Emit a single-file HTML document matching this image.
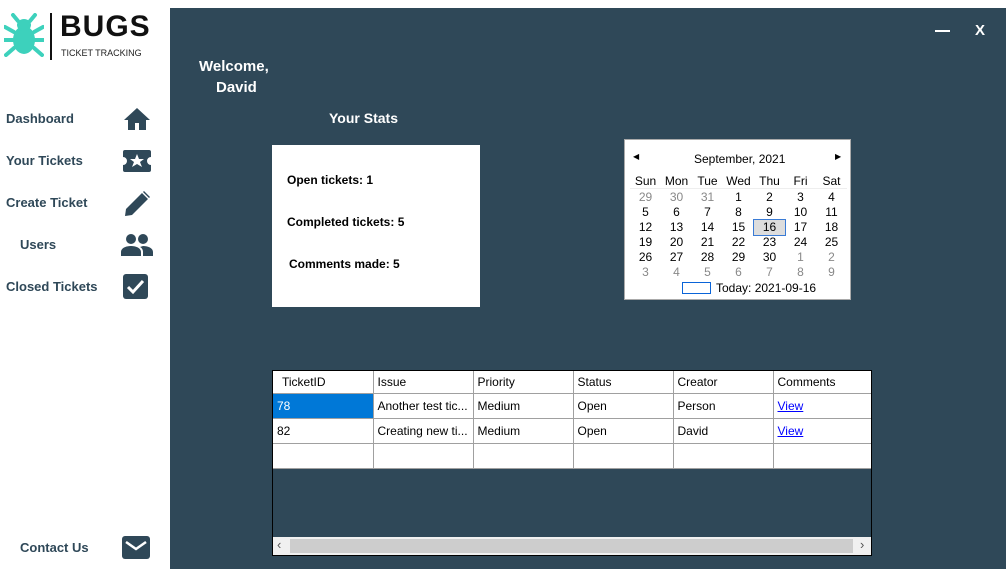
<!DOCTYPE html>
<html><head><style>
*{margin:0;padding:0;box-sizing:border-box}
body{width:1006px;height:569px;background:#fff;position:relative;overflow:hidden;font-family:"Liberation Sans",sans-serif}
.a{position:absolute}
.nav{position:absolute;left:6px;font-size:13px;font-weight:bold;color:#2f4858}
.main{position:absolute;left:170px;top:8px;width:836px;height:561px;background:#2f4858}
.w{color:#fff;font-weight:bold;font-size:15px;position:absolute}
.cal{position:absolute;left:624px;top:139px;width:227px;height:161px;background:#fff;border:1px solid #aaa;font-size:12px;color:#000}
.cal .g{position:absolute;left:5px;width:217px;display:grid;grid-template-columns:repeat(7,31px);text-align:center}
.gr{color:#888}
table{border-collapse:collapse;font-size:12px;table-layout:fixed}
td{width:100px;height:25px;border:1px solid #a0a0a0;padding:0 0 0 4px;font-size:12px;line-height:14px;overflow:hidden;white-space:nowrap}
tr.h td{height:22px;border-top:0}
</style></head><body>
<svg class="a" style="left:4px;top:13px" width="40" height="44" viewBox="0 0 40 44"><g fill="#3dd1bc"><ellipse cx="20" cy="27" rx="11" ry="14"/><ellipse cx="20" cy="12" rx="7" ry="6"/><path d="M14 8l-5-6M26 8l5-6M10 19l-9-5M30 19l9-5M9 27H0M31 27h9M10 35l-8 7M30 35l8 7" stroke="#3dd1bc" stroke-width="4" stroke-linecap="round"/></g></svg>
<div class="a" style="left:50px;top:13px;width:2px;height:47px;background:#111"></div>
<div class="a" style="left:60px;top:10px;font-size:30px;font-weight:bold;color:#111;letter-spacing:1px">BUGS</div>
<div class="a" style="left:61px;top:48px;font-size:9px;color:#222">TICKET TRACKING</div>
<div class="nav" style="top:111px">Dashboard</div>
<div class="nav" style="top:153px">Your Tickets</div>
<div class="nav" style="top:195px">Create Ticket</div>
<div class="nav" style="top:237px;left:20px">Users</div>
<div class="nav" style="top:279px">Closed Tickets</div>
<div class="nav" style="top:540px;left:20px">Contact Us</div>
<svg class="a" style="left:123px;top:107px" width="28" height="24" viewBox="0 0 28 24"><path fill="#2f4858" d="M14 1L1 13h4v10h7v-7h4v7h7V13h4z"/></svg>
<svg class="a" style="left:123px;top:150px" width="28" height="22" viewBox="0 0 28 22"><path fill="#2f4858" d="M2 0h24a2 2 0 012 2v5a4 4 0 000 8v5a2 2 0 01-2 2H2a2 2 0 01-2-2v-5a4 4 0 000-8V2a2 2 0 012-2z"/><path fill="#fff" d="M14 4l2 5h5l-4 3 2 5-5-3-5 3 2-5-4-3h5z"/></svg>
<svg class="a" style="left:124px;top:191px" width="26" height="26" viewBox="0 0 26 26"><path fill="#2f4858" d="M1 25l1-7L18 2l6 6L8 24z M20 0l6 6-1 1-6-6z"/></svg>
<svg class="a" style="left:121px;top:234px" width="32" height="22" viewBox="0 0 32 22"><g fill="#2f4858"><circle cx="10" cy="5" r="5"/><circle cx="22" cy="5" r="5"/><path d="M0 22v-4c0-4 5-6 10-6s10 2 10 6v4zM22 12c5 0 10 2 10 6v4h-10v-4c0-2-1-4-3-5z"/></g></svg>
<svg class="a" style="left:123px;top:274px" width="25" height="25" viewBox="0 0 25 25"><rect width="25" height="25" rx="3" fill="#2f4858"/><path d="M5 13l5 5 10-11" stroke="#fff" stroke-width="3" fill="none"/></svg>
<svg class="a" style="left:122px;top:536px" width="28" height="23" viewBox="0 0 28 23"><rect width="28" height="23" rx="3" fill="#2f4858"/><path d="M4 6l10 7 10-7" stroke="#fff" stroke-width="2.5" fill="none"/></svg>
<div class="main"></div>
<div class="w" style="left:199px;top:58px">Welcome,</div>
<div class="w" style="left:216px;top:79px">David</div>
<div class="w" style="left:329px;top:110px;font-size:14px">Your Stats</div>
<div class="a" style="left:935px;top:30px;width:15px;height:2px;background:#fff"></div>
<div class="w" style="left:975px;top:22px;font-size:15px">X</div>
<div class="a" style="left:272px;top:145px;width:208px;height:162px;background:#fff;font-size:12px;font-weight:bold">
<div class="a" style="left:15px;top:28px">Open tickets: 1</div>
<div class="a" style="left:15px;top:70px">Completed tickets: 5</div>
<div class="a" style="left:17px;top:112px">Comments made: 5</div>
</div>
<div class="cal">
<div class="a" style="left:8px;top:12px;font-size:8px">◀</div>
<div class="a" style="left:210px;top:12px;font-size:8px">▶</div>
<div class="a" style="left:69px;top:12px">September, 2021</div>
<div class="g" style="top:34px;border-bottom:1px solid #eee"><span>Sun</span><span>Mon</span><span>Tue</span><span>Wed</span><span>Thu</span><span>Fri</span><span>Sat</span></div>
<div class="g" style="top:50px;line-height:15px">
<span class="gr">29</span><span class="gr">30</span><span class="gr">31</span><span>1</span><span>2</span><span>3</span><span>4</span>
<span>5</span><span>6</span><span>7</span><span>8</span><span>9</span><span>10</span><span>11</span>
<span>12</span><span>13</span><span>14</span><span>15</span><span style="background:#ddd;outline:1px solid #3a7bd5">16</span><span>17</span><span>18</span>
<span>19</span><span>20</span><span>21</span><span>22</span><span>23</span><span>24</span><span>25</span>
<span>26</span><span>27</span><span>28</span><span>29</span><span>30</span><span class="gr">1</span><span class="gr">2</span>
<span class="gr">3</span><span class="gr">4</span><span class="gr">5</span><span class="gr">6</span><span class="gr">7</span><span class="gr">8</span><span class="gr">9</span></div>
<div class="a" style="left:57px;top:142px;width:29px;height:12px;border:1px solid #0a64d8"></div>
<div class="a" style="left:91px;top:141px">Today: 2021-09-16</div>
</div>
<div class="a" style="left:272px;top:370px;width:600px;height:186px;border:1px solid #000;background:#2f4858;overflow:hidden">
<table style="background:#fff;width:600px">
<tr class="h"><td style="border-left:0;padding-left:9px">TicketID</td><td>Issue</td><td>Priority</td><td>Status</td><td>Creator</td><td style="border-right:0">Comments</td></tr>
<tr><td style="background:#0078d7;color:#fff;border-left:0">78</td><td>Another test tic...</td><td>Medium</td><td>Open</td><td>Person</td><td style="border-right:0"><u style="color:#00f">View</u></td></tr>
<tr><td style="border-left:0">82</td><td>Creating new ti...</td><td>Medium</td><td>Open</td><td>David</td><td style="border-right:0"><u style="color:#00f">View</u></td></tr>
<tr><td style="border-left:0"></td><td></td><td></td><td></td><td></td><td style="border-right:0"></td></tr>
</table>
<div class="a" style="left:0;top:166px;width:598px;height:18px;background:#f0f0f0;font-size:13px;color:#555">
<span class="a" style="left:4px;top:0px">‹</span><div class="a" style="left:17px;top:2px;width:563px;height:14px;background:#cdcdcd"></div><span class="a" style="left:587px;top:0px">›</span></div>
</div>
</body></html>
